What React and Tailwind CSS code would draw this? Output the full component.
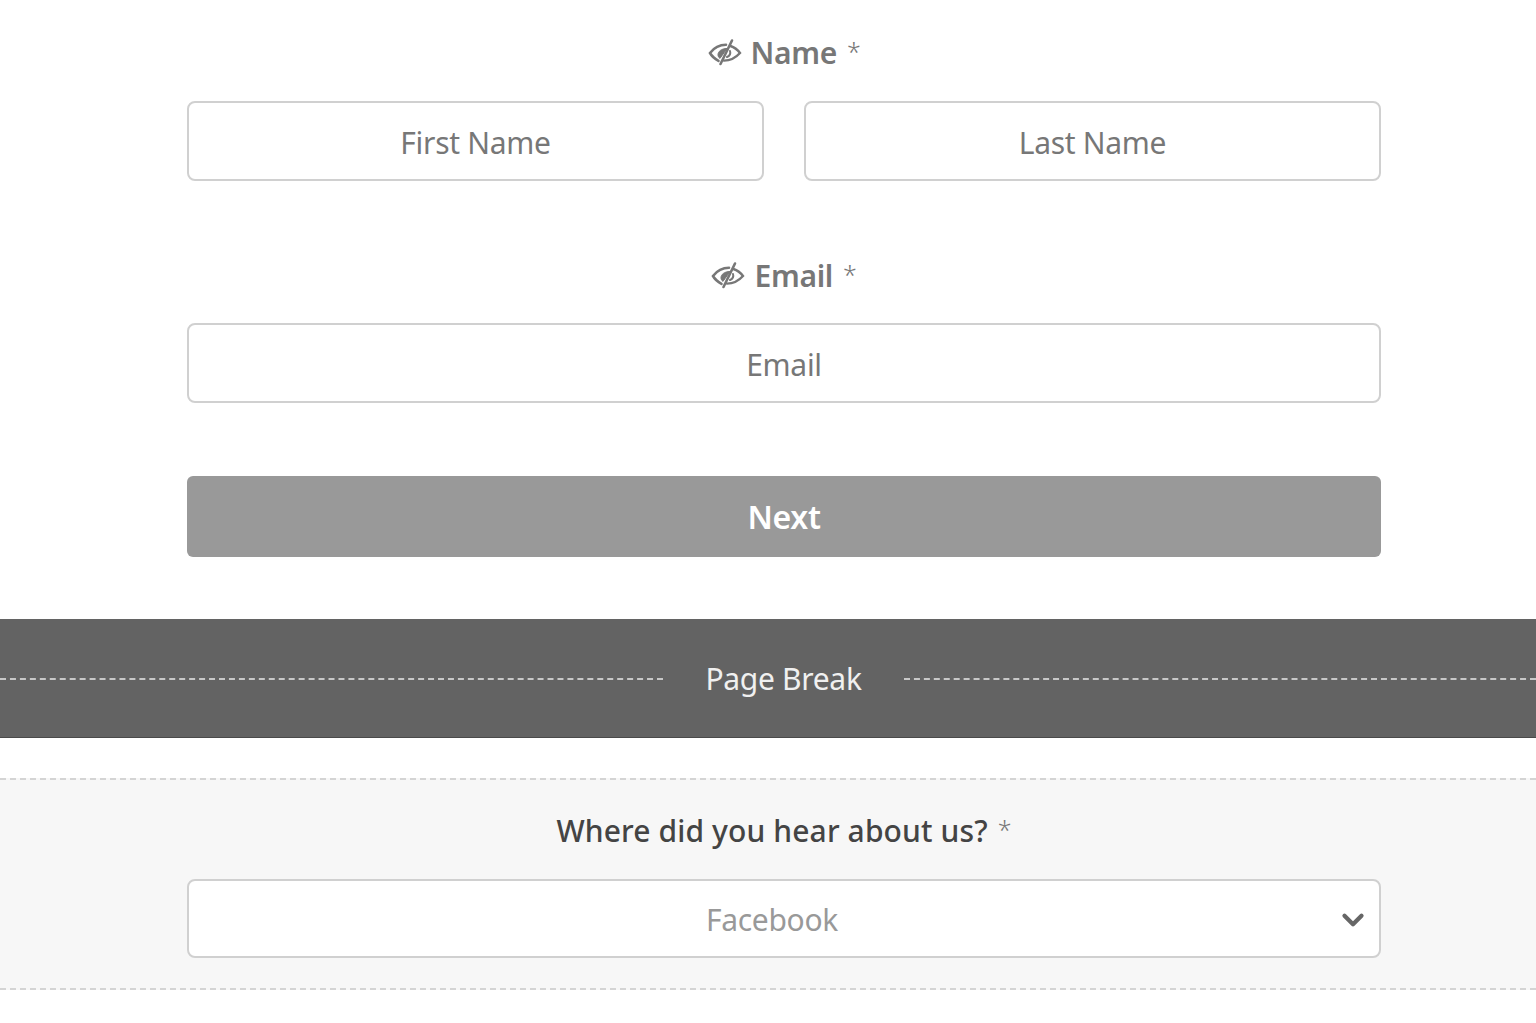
import React from 'react';
import { ChevronDown } from 'lucide-react';

function HiddenIcon() {
  return (
    <svg width="34" height="28" viewBox="0 0 34 28" fill="none" className="shrink-0">
      {/* eye outline, left half */}
      <path d="M18 6.8 C11.5 6.8 5.8 10 2 15 C4 18.6 7 21 10.5 22.8" stroke="#777777" strokeWidth="2.6" strokeLinecap="round" />
      {/* pupil wedge */}
      <path d="M19 10.5 C13.5 10.5 9.8 13.5 10 17 C10.1 18.4 10.8 19.5 12 20.4 Z" fill="#777777" stroke="#777777" strokeWidth="1" strokeLinejoin="round" />
      {/* eye outline, right half */}
      <path d="M22.5 8 C26.2 9.2 29.4 11.6 32 15 C27.5 20 22 22.6 16 22.6" stroke="#777777" strokeWidth="2.4" strokeLinecap="round" />
      <path d="M22 13 C22.8 15.5 21.6 17.8 19 19" stroke="#777777" strokeWidth="2" strokeLinecap="round" />
      {/* slash */}
      <path d="M24 2.5 L12.5 26" stroke="#777777" strokeWidth="2.6" strokeLinecap="round" />
    </svg>
  );
}

function FieldLabel({ children }) {
  return (
    <div className="flex items-center justify-center gap-[9px] h-[40px] text-[30px] font-semibold text-[#777777]">
      <HiddenIcon />
      <span>{children}</span>
      <span className="font-light text-[25px] ml-[1px] -mt-[1px]">*</span>
    </div>
  );
}

function TextInput({ placeholder }) {
  return (
    <div className="flex-1 h-[80px] flex items-center justify-center pt-[2px] rounded-[8px] border-2 border-[#d0d0d0] bg-white text-[30px] text-[#777777]">
      {placeholder}
    </div>
  );
}

export default function App() {
  return (
    <div className="w-[1536px] h-[1023px] overflow-hidden bg-white font-['Noto_Sans',sans-serif] tracking-[-0.3px]">
      <div className="px-[187px] pr-[155px] pt-[32px]">
        <FieldLabel>Name</FieldLabel>
        <div className="flex gap-[40px] mt-[29px]">
          <TextInput placeholder="First Name" />
          <TextInput placeholder="Last Name" />
        </div>
        <div className="mt-[74px]">
          <FieldLabel>Email</FieldLabel>
        </div>
        <div className="flex mt-[28px]">
          <TextInput placeholder="Email" />
        </div>
        <div className="mt-[73px] h-[81px] flex items-center justify-center rounded-[6px] bg-[#999999] text-[32px] font-semibold text-white">
          Next
        </div>
      </div>

      <div className="mt-[62px] h-[119px] bg-[#636363] border-b border-[#4a4a4a] flex items-center text-[#f0f0f0]">
        <div className="w-[663px] mt-[1px] border-t-2 border-dashed border-[#c8c8c8]" />
        <span className="w-[241px] text-center text-[30px]">Page Break</span>
        <div className="flex-1 mt-[1px] border-t-2 border-dashed border-[#c8c8c8]" />
      </div>

      <div className="mt-[40px] h-[212px] bg-[#f7f7f7] border-y-2 border-dashed border-[#d4d4d4] px-[187px] pr-[155px] pt-[30px]">
        <div className="flex items-center justify-center gap-[10px] h-[40px] text-[30px] font-medium tracking-[0.12px] text-[#444444]">
          <span>Where did you hear about us?</span>
          <span className="font-light text-[25px] text-[#777777] -mt-[1px]">*</span>
        </div>
        <div className="relative mt-[29px] h-[79px] flex items-center justify-center pt-[2px] pr-[24px] rounded-[8px] border-2 border-[#d0d0d0] bg-white text-[30px] text-[#999999]">
          Facebook
          <ChevronDown className="absolute right-[9px] top-[22px] text-[#666666]" size={34} strokeWidth={3} />
        </div>
      </div>
    </div>
  );
}
